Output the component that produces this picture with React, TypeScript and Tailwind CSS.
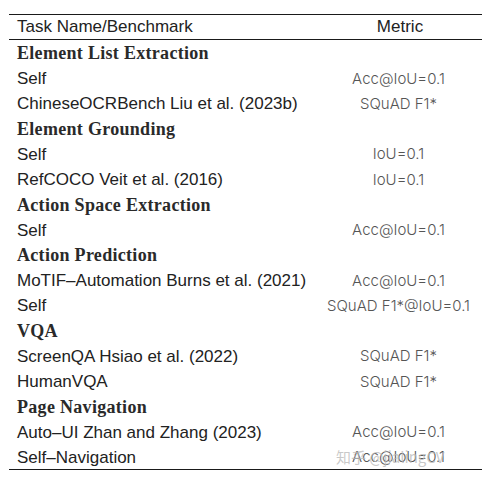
import React from 'react';

type Row = { name: string; metric?: string; section?: boolean };

const rows: Row[] = [
  { name: 'Element List Extraction', section: true },
  { name: 'Self', metric: 'Acc@IoU=0.1' },
  { name: 'ChineseOCRBench Liu et al. (2023b)', metric: 'SQuAD F1*' },
  { name: 'Element Grounding', section: true },
  { name: 'Self', metric: 'IoU=0.1' },
  { name: 'RefCOCO Veit et al. (2016)', metric: 'IoU=0.1' },
  { name: 'Action Space Extraction', section: true },
  { name: 'Self', metric: 'Acc@IoU=0.1' },
  { name: 'Action Prediction', section: true },
  { name: 'MoTIF\u2013Automation Burns et al. (2021)', metric: 'Acc@IoU=0.1' },
  { name: 'Self', metric: 'SQuAD F1*@IoU=0.1' },
  { name: 'VQA', section: true },
  { name: 'ScreenQA Hsiao et al. (2022)', metric: 'SQuAD F1*' },
  { name: 'HumanVQA', metric: 'SQuAD F1*' },
  { name: 'Page Navigation', section: true },
  { name: 'Auto\u2013UI Zhan and Zhang (2023)', metric: 'Acc@IoU=0.1' },
  { name: 'Self\u2013Navigation', metric: 'Acc@IoU=0.1' },
];

export default function App() {
  return (
    <div className="w-[487px] h-[479px] bg-white pt-[14px] px-[9px] relative overflow-hidden">
      <div className="w-[473px] border-t-[1.5px] border-b-[1.5px] border-[#1a1a1a]">
        <div className="flex h-[25px] items-center border-b-[1.5px] border-[#1a1a1a] text-[17px] text-[#222] font-['Liberation_Sans',sans-serif]">
          <div className="w-[309px] pl-2">Task Name/Benchmark</div>
          <div className="flex-1 text-center">Metric</div>
        </div>
        {rows.map((r, i) => (
          <div key={i} className="flex h-[25.25px] items-center pt-[2px]">
            {r.section ? (
              <div className="pl-2 font-['Liberation_Serif',serif] font-bold text-[18px] tracking-[0.3px] text-[#2a2a2a]">{r.name}</div>
            ) : (
              <>
                <div className="w-[309px] pl-2 font-['Liberation_Sans',sans-serif] text-[17px] text-[#222]">{r.name}</div>
                <div className="flex-1 text-center font-['Inter',sans-serif] font-light text-[15px] text-[#555] pr-[3px]">{r.metric}</div>
              </>
            )}
          </div>
        ))}
      </div>
      <div className="absolute left-[336px] top-[446px] font-['Noto_Sans_CJK_SC',sans-serif] text-[15px] text-[#bbb]/80">
        知乎 @jialingCV
      </div>
    </div>
  );
}
